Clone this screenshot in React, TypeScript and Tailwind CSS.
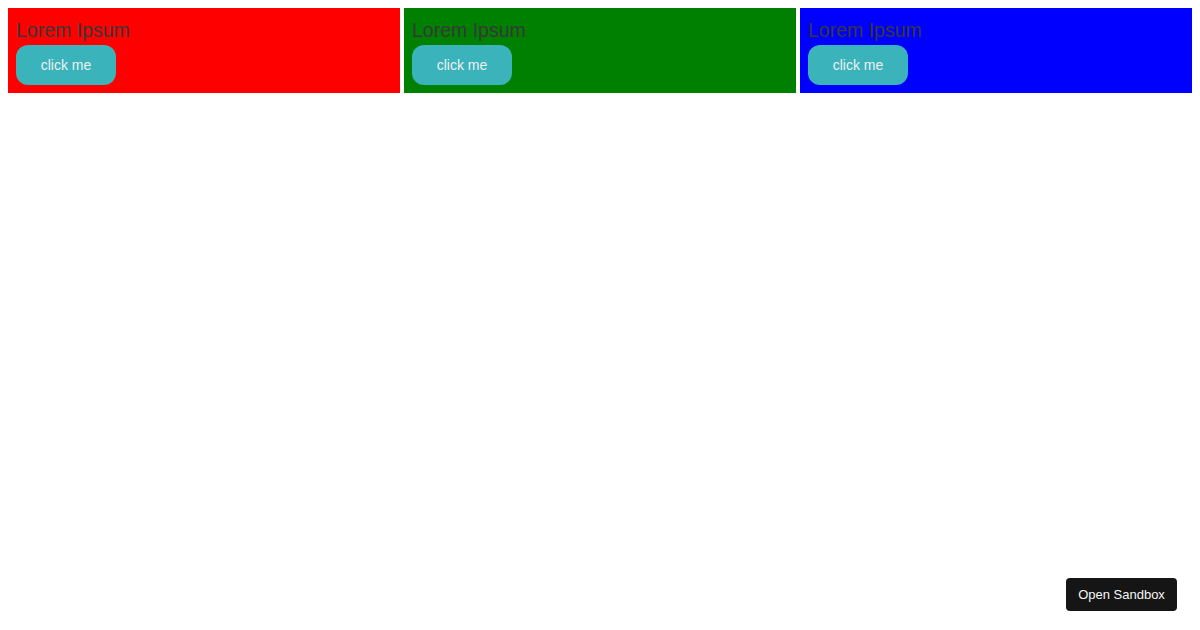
import React from "react";

const panels = ["bg-[#ff0000]", "bg-[#008000]", "bg-[#0000ff]"];

export default function App() {
  return (
    <div className="relative w-[1200px] h-[630px] bg-white p-2" style={{ fontFamily: '"Liberation Sans", Arial, sans-serif' }}>
      <div className="flex gap-1">
        {panels.map((c, i) => (
          <div key={i} className={`${c} w-[392px] h-[85px] p-2 flex flex-col`}>
            <div className="text-[19.5px] leading-[29px] text-[#383838]">Lorem Ipsum</div>
            <button className="w-[100px] h-[40px] rounded-xl bg-[#3ab3bb] text-[14px] text-[#f0f0f0]">click me</button>
          </div>
        ))}
      </div>
      <button className="absolute right-[23px] bottom-[19px] w-[111px] h-[33px] rounded bg-[#151515] text-[13px] text-[#f5f5f5]">
        Open Sandbox
      </button>
    </div>
  );
}
